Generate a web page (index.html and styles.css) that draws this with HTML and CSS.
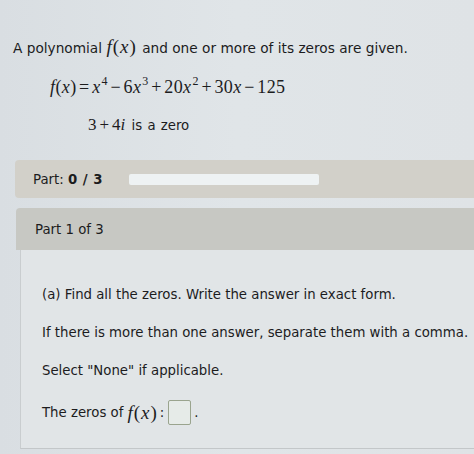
FILE: index.html
```html
<!DOCTYPE html>
<html>
<head>
<meta charset="utf-8">
<link rel="stylesheet" href="styles.css">
</head>
<body>
<div class="page">
  <div class="intro">
    <p class="lead">A polynomial <span class="fx"><i>f</i>(<i>x</i>)</span> and one or more of its zeros are given.</p>
    <p class="formula"><i>f</i>(<i>x</i>)<span class="op">=</span><i>x</i><sup>4</sup><span class="op">−</span>6<i>x</i><sup>3</sup><span class="op">+</span>20<i>x</i><sup>2</sup><span class="op">+</span>30<i>x</i><span class="op">−</span>125</p>
    <p class="zero"><span class="math">3<span class="op">+</span>4<i>i</i></span> is a zero</p>
  </div>
  <div class="progress">
    <span class="plabel">Part: <b>0 / 3</b></span>
    <span class="pbar"></span>
  </div>
  <div class="part">
    <div class="part-head">Part 1 of 3</div>
    <div class="part-body">
      <p class="q">(a) Find all the zeros. Write the answer in exact form.</p>
      <p class="q">If there is more than one answer, separate them with a comma.</p>
      <p class="q">Select "None" if applicable.</p>
      <p class="q answer">The zeros of <span class="fx"><i>f</i>(<i>x</i>)</span>:<span class="box"></span>.</p>
    </div>
  </div>
</div>
</body>
</html>
```
FILE: styles.css
```css
html, body {
  margin: 0;
  padding: 0;
}
body {
  width: 474px;
  height: 454px;
  overflow: hidden;
  background: linear-gradient(90deg, #d9dee2 0%, #e0e5e8 50%, #dfe3e6 100%);
  font-family: "DejaVu Sans", Verdana, sans-serif;
  font-size: 13.3px;
  color: #1c1c1e;
}
p { margin: 0; }
.page {
  display: flex;
  flex-direction: column;
}
.intro {
  padding: 38px 0 0 13px;
  height: 122px;
  box-sizing: border-box;
}
.lead {
  line-height: 18px;
  font-size: 13.7px;
}
.fx {
  font-family: "Liberation Serif", "Times New Roman", serif;
  font-size: 19px;
  letter-spacing: 1px;
}
.lead .fx {
  margin-right: 1px;
}
.formula {
  font-family: "Liberation Serif", "Times New Roman", serif;
  font-size: 18px;
  letter-spacing: 0.4px;
  margin: 20px 0 0 37px;
  line-height: 20px;
}
.op {
  margin: 0 2.5px;
}
.formula sup {
  font-size: 12px;
  vertical-align: 8px;
  line-height: 0;
  margin-left: 1px;
}
.zero {
  margin: 18px 0 0 75px;
  line-height: 20px;
  word-spacing: 1px;
}
.math {
  font-family: "Liberation Serif", "Times New Roman", serif;
  font-size: 17px;
  margin-right: 1px;
}
.math .op {
  margin: 0 3px;
}
.progress {
  margin: 38px 0 0 15px;
  height: 38px;
  background: #d2d0c9;
  border-radius: 4px 0 0 4px;
  display: flex;
  align-items: center;
  padding-left: 18px;
  gap: 26px;
}
.plabel b {
  font-weight: bold;
  letter-spacing: 0.5px;
}
.pbar {
  width: 190px;
  height: 11px;
  background: #eef2f3;
  border-radius: 2px;
}
.part {
  margin: 10px 0 0 16px;
  border-radius: 4px 0 0 0;
  overflow: hidden;
}
.part-head {
  height: 42px;
  background: #c7c8c3;
  display: flex;
  align-items: center;
  padding-left: 19px;
}
.part-body {
  margin-left: 4px;
  border-left: 1px solid #c9cdcf;
  border-bottom: 1px solid #c3c7c9;
  height: 199px;
  background: #e1e5e7;
  padding: 36px 0 0 21px;
  box-sizing: border-box;
  display: flex;
  flex-direction: column;
  gap: 21px;
}
.q {
  line-height: 17px;
}
.answer {
  display: flex;
  align-items: center;
}
.answer .fx {
  margin-left: 4px;
  margin-right: 2px;
}
.box {
  display: inline-block;
  width: 21px;
  height: 23px;
  border: 1.5px solid #9aa48e;
  border-radius: 2px;
  background: #e6ebe8;
  margin: 0 3px 0 4px;
}
```
